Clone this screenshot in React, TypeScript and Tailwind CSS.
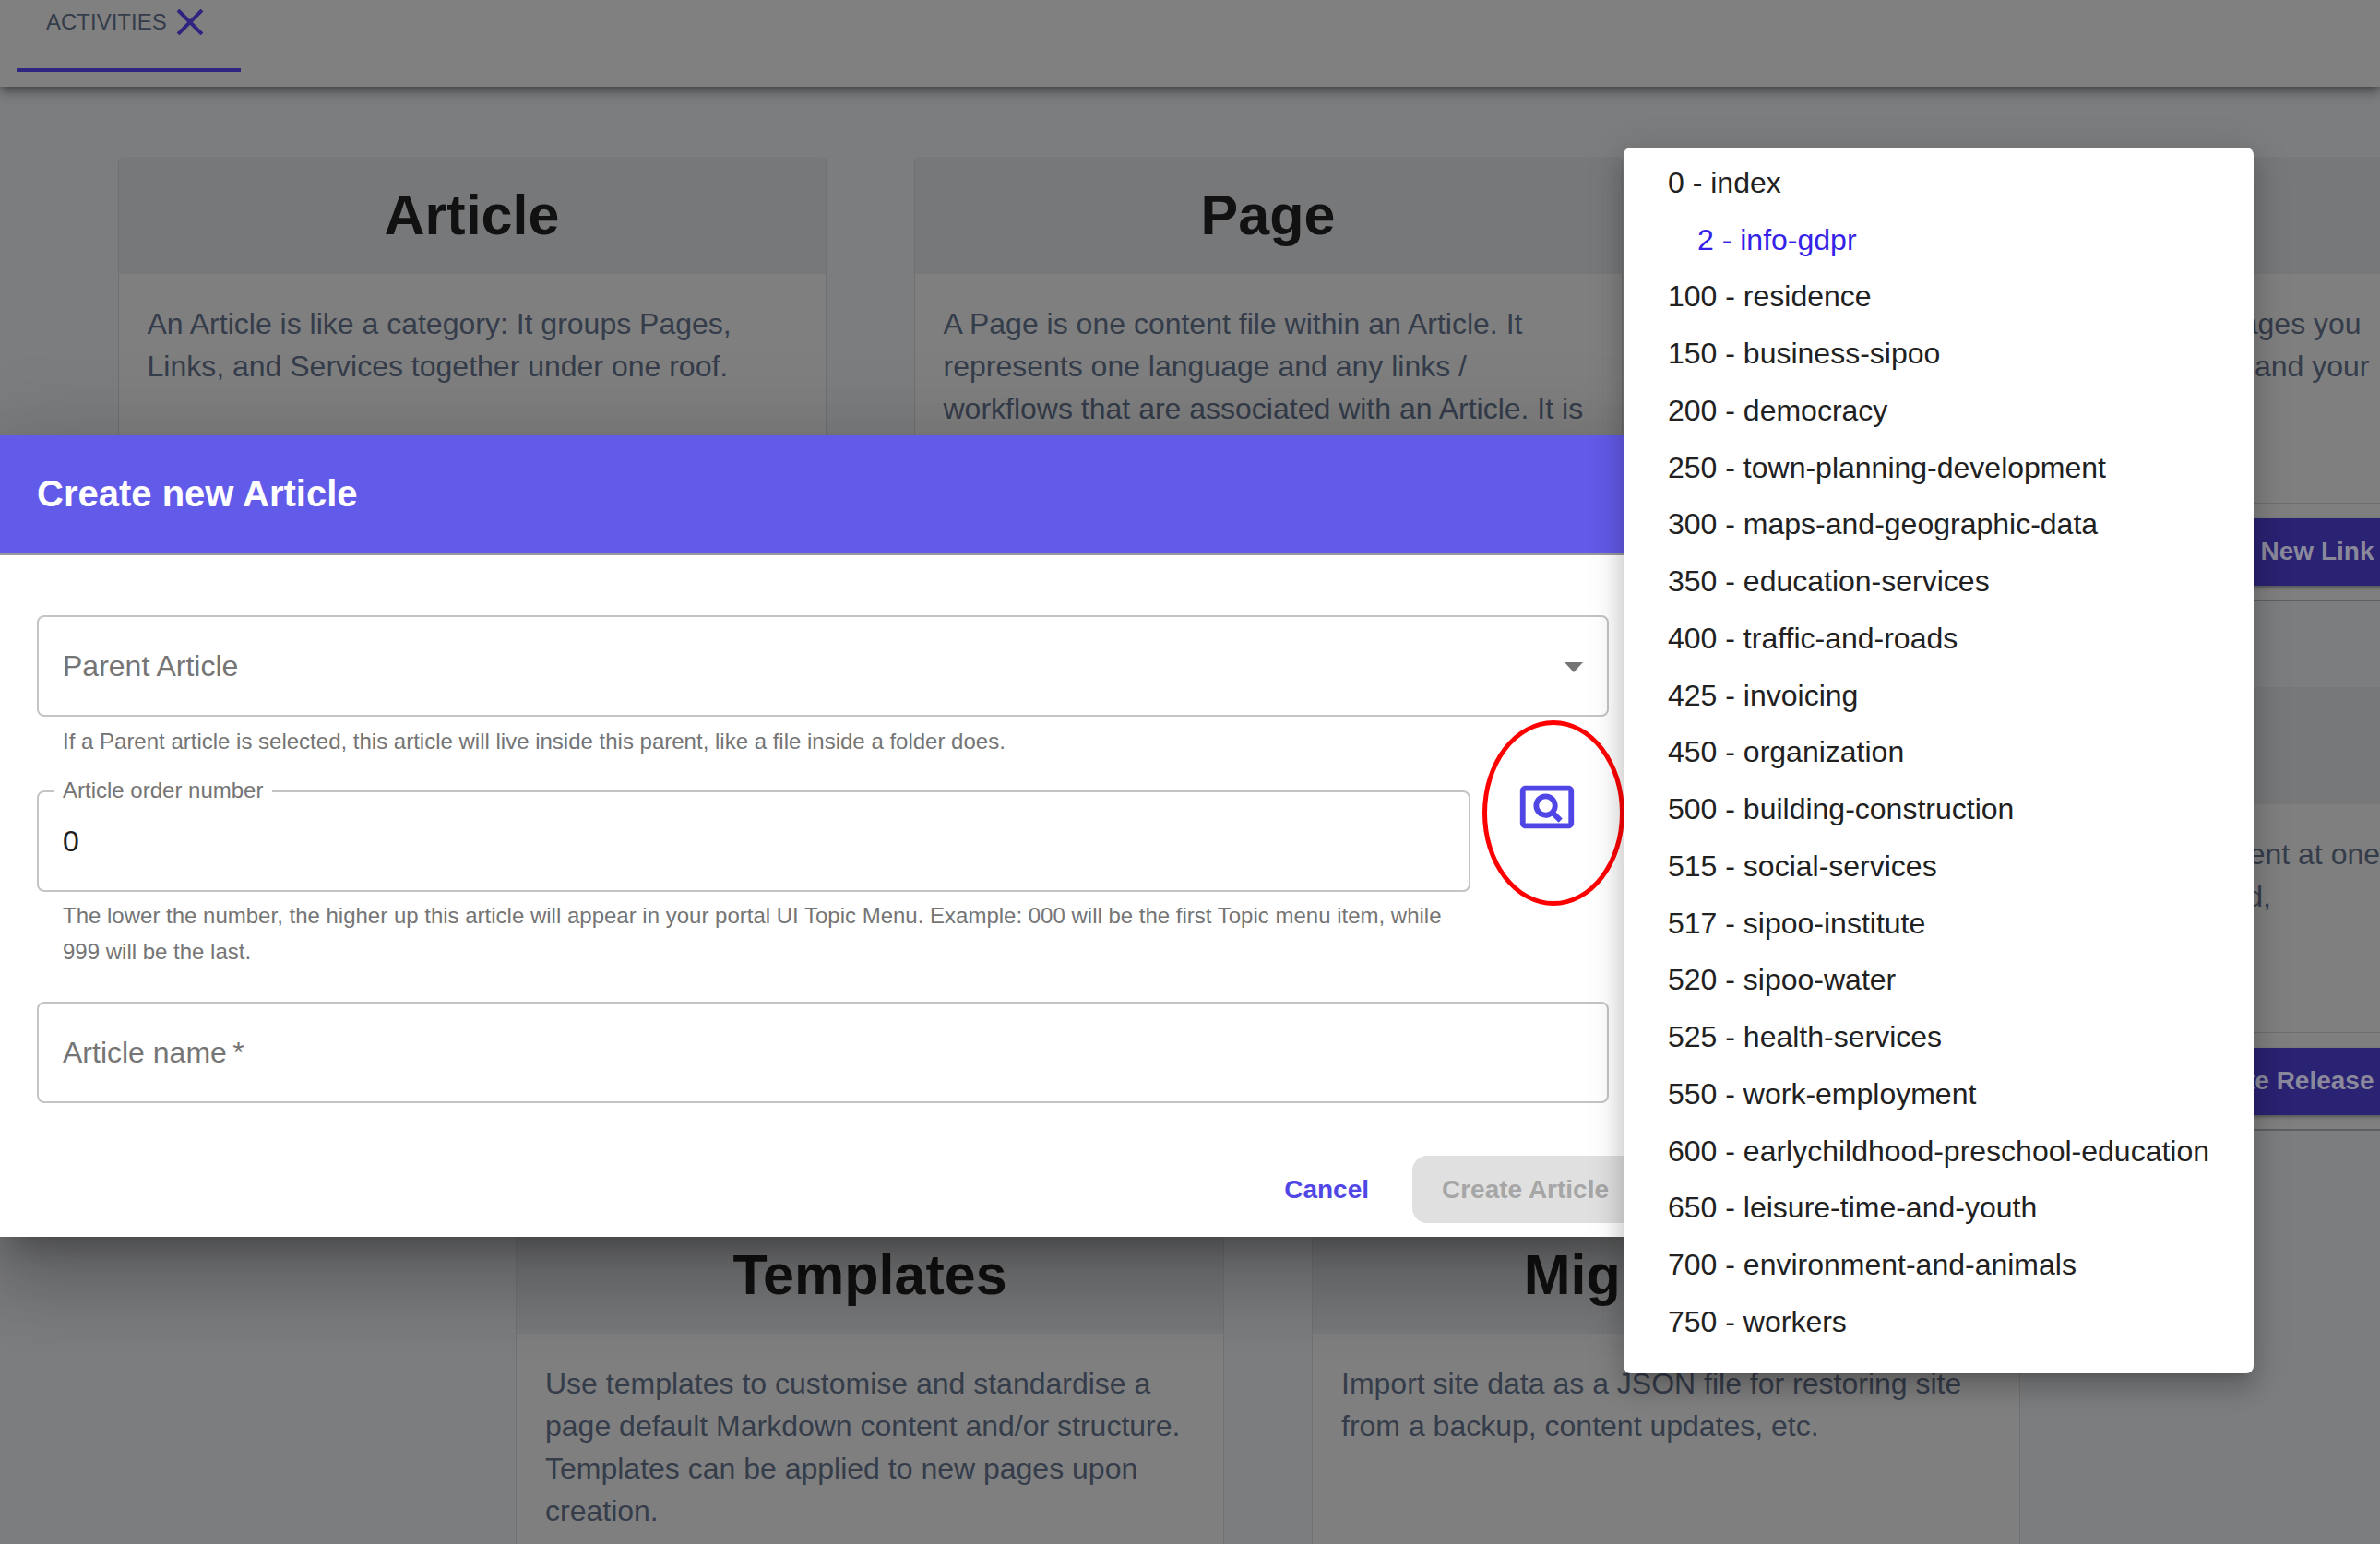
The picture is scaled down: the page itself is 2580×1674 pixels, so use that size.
import { MdOutlinePageview } from "react-icons/md";

const menuItems: [string, boolean?][] = [
  ["0 - index"],
  ["2 - info-gdpr", true],
  ["100 - residence"],
  ["150 - business-sipoo"],
  ["200 - democracy"],
  ["250 - town-planning-development"],
  ["300 - maps-and-geographic-data"],
  ["350 - education-services"],
  ["400 - traffic-and-roads"],
  ["425 - invoicing"],
  ["450 - organization"],
  ["500 - building-construction"],
  ["515 - social-services"],
  ["517 - sipoo-institute"],
  ["520 - sipoo-water"],
  ["525 - health-services"],
  ["550 - work-employment"],
  ["600 - earlychildhood-preschool-education"],
  ["650 - leisure-time-and-youth"],
  ["700 - environment-and-animals"],
  ["750 - workers"],
];

function Card({ title, lines, action, h }: { title: string; lines: string[]; action?: string; h: string }) {
  return (
    <div className={`w-[768px] flex flex-col bg-[#7f7f7f] border-x border-[#707172] rounded-t-[6px] ${h}`}>
      <div className="h-[127px] shrink-0 flex items-center justify-center bg-[#77787a] rounded-t-[6px]">
        <h2 className="text-[61px] font-bold text-[#111111] leading-none">{title}</h2>
      </div>
      <div className="px-[31px] pt-[31px] text-[32px] leading-[46px] text-[#353c4a]">
        {lines.map((l) => (
          <div key={l} className="whitespace-nowrap">{l}</div>
        ))}
      </div>
      {action && (
        <div className="mt-auto h-[107px] px-[32px] flex items-center border-t border-t-[#6e6e6e] border-b-2 border-b-[#5f5f5f]">
          <div className="h-[73px] w-full flex items-center justify-end pr-[15px] bg-[#2a2272] text-[#8a899b] text-[28px] font-bold shadow-[0_2px_4px_rgba(0,0,0,0.35)]">
            {action}
          </div>
        </div>
      )}
    </div>
  );
}

export default function App() {
  return (
    <div className="relative w-[2580px] h-[1674px] overflow-hidden bg-[#7c7d7f] font-['Liberation_Sans',sans-serif]">
      <div className="h-[94px] bg-[#808080] shadow-[0_4px_8px_-2px_rgba(0,0,0,0.35),0_8px_10px_0_rgba(0,0,0,0.14),0_2px_20px_0_rgba(0,0,0,0.12)] relative z-10">
        <div className="absolute left-[18px] top-[74px] w-[243px] h-[4px] bg-[#2f2580]" />
        <div className="flex items-center pl-[50px] pt-[10px] gap-[10px]">
          <span className="text-[24px] leading-[26px] text-[#353c4a]">ACTIVITIES</span>
          <svg width="30" height="28" viewBox="0 0 30 28" fill="none" stroke="#2f2580" strokeWidth="4">
            <path d="M2 1 L28 27 M28 1 L2 27" />
          </svg>
        </div>
      </div>

      <div className="w-[2749px] pt-[76px] flex flex-wrap justify-center gap-x-[95px] gap-y-[93px]">
        <Card
          h="h-[482px]"
          title="Article"
          lines={["An Article is like a category: It groups Pages,", "Links, and Services together under one roof."]}
          action="Create New Article"
        />
        <Card
          h="h-[482px]"
          title="Page"
          lines={[
            "A Page is one content file within an Article. It",
            "represents one language and any links /",
            "workflows that are associated with an Article. It is",
          ]}
          action="Create New Page"
        />
        <Card
          h="h-[482px]"
          title="Link"
          lines={["Links are direct references to certain pages you", "can reference from your portals menus and your"]}
          action="Create New Link"
        />
        <Card h="h-[481px]" title="Service" lines={["Services are external tools."]} action="Create New Service" />
        <Card h="h-[481px]" title="Workflow" lines={["Workflows are ordered steps."]} action="Create New Workflow" />
        <Card
          h="h-[481px]"
          title="Release"
          lines={["A Release publishes all your site's content at one", "time, on a date that you have scheduled,"]}
          action="Create Release"
        />
        <Card
          h="h-[481px]"
          title="Templates"
          lines={[
            "Use templates to customise and standardise a",
            "page default Markdown content and/or structure.",
            "Templates can be applied to new pages upon",
            "creation.",
          ]}
        />
        <Card
          h="h-[481px]"
          title="Migrations"
          lines={["Import site data as a JSON file for restoring site", "from a backup, content updates, etc."]}
        />
      </div>

      <div className="absolute z-20 left-0 top-[472px] w-[1784px] h-[869px] bg-white flex flex-col shadow-[0_22px_30px_-14px_rgba(0,0,0,0.25),0_48px_76px_6px_rgba(0,0,0,0.16),0_18px_92px_16px_rgba(0,0,0,0.14)]">
        <div className="h-[130px] shrink-0 flex items-center pl-[40px] pb-[3px] bg-[#625ae8] border-b-2 border-[#9a9a9a]">
          <h1 className="text-[40px] font-bold text-white">Create new Article</h1>
        </div>

        <div className="pl-[40px] pr-[40px] pt-[65px] flex flex-col">
          <div className="h-[110px] border-2 border-[#c4c4c4] rounded-[8px] flex items-center justify-between pl-[26px] pr-[26px]">
            <span className="text-[32px] text-[#757575]">Parent Article</span>
            <svg width="20" height="11" viewBox="0 0 20 11" className="mt-[2px]">
              <path d="M0 0 H20 L10 11 Z" fill="#757575" />
            </svg>
          </div>
          <p className="mt-[7px] pl-[28px] text-[24px] leading-[39px] text-[#757575]">
            If a Parent article is selected, this article will live inside this parent, like a file inside a folder does.
          </p>

          <div className="mt-[34px] flex">
            <div className="w-[1554px] shrink-0">
              <div className="relative h-[110px] border-2 border-[#c4c4c4] rounded-[8px] flex items-center pl-[26px]">
                <span className="absolute left-[16px] -top-[16px] px-[10px] bg-white text-[24px] leading-[28px] text-[#757575]">
                  Article order number
                </span>
                <span className="text-[32px] text-[#212121]">0</span>
              </div>
              <p className="mt-[6px] pl-[28px] pr-[20px] text-[24px] leading-[39px] text-[#757575]">
                The lower the number, the higher up this article will appear in your portal UI Topic Menu. Example: 000 will be the first Topic menu item, while 999 will be the last.
              </p>
            </div>
            <div className="relative w-[150px] h-[110px]">
              <MdOutlinePageview className="absolute left-[48px] -top-[17px] text-[#4f46e5]" size={70} />
              <div className="absolute left-[13px] -top-[76px] w-[154px] h-[201px] rounded-[50%] border-[5px] border-[#ff0000]" />
            </div>
          </div>

          <div className="mt-[35px] h-[110px] border-2 border-[#c4c4c4] rounded-[8px] flex items-center pl-[26px]">
            <span className="text-[32px] text-[#757575]">Article name{"\u2009"}*</span>
          </div>
        </div>

        <div className="mt-[57px] flex items-center justify-end pr-[8px] gap-[47px]">
          <span className="text-[28px] font-bold text-[#4f46e5]">Cancel</span>
          <div className="h-[73px] w-[245px] rounded-[16px] bg-[#e0e0e0] flex items-center pl-[32px]">
            <span className="text-[28px] font-bold text-[#a6a6a6]">Create Article</span>
          </div>
        </div>
      </div>

      <div className="absolute z-30 left-[1760px] top-[160px] w-[683px] h-[1329px] bg-white rounded-[8px] pt-[7px] shadow-[0_10px_10px_-10px_rgba(0,0,0,0.2),0_16px_24px_2px_rgba(0,0,0,0.14),0_6px_40px_4px_rgba(0,0,0,0.12)]">
        {menuItems.map(([label, active]) => (
          <div
            key={label}
            className={`h-[61.75px] flex items-center text-[32px] whitespace-nowrap ${
              active ? "pl-[80px] text-[#3422e8]" : "pl-[48px] text-[#212121]"
            }`}
          >
            {label}
          </div>
        ))}
      </div>
    </div>
  );
}
